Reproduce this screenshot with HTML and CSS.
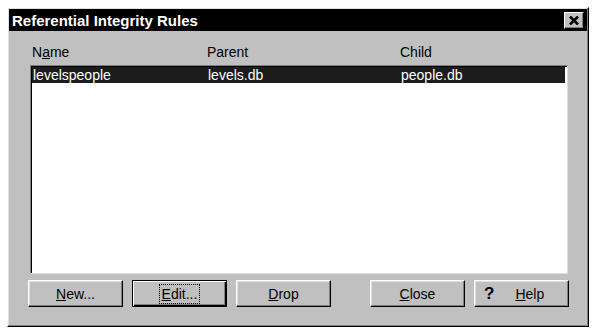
FILE: index.html
```html
<!DOCTYPE html>
<html>
<head>
<meta charset="utf-8">
<link rel="stylesheet" href="styles.css">
</head>
<body>
<div class="window">
  <div class="titlebar">
    <span class="title">Referential Integrity Rules</span>
    <div class="close-btn">
      <svg width="10" height="9" viewBox="0 0 10 9"><path d="M1 0.5 L9 8.5 M9 0.5 L1 8.5" stroke="#000" stroke-width="2.6"/></svg>
    </div>
  </div>
  <div class="content">
    <div class="headers">
      <span>N<u>a</u>me</span>
      <span>Parent</span>
      <span>Child</span>
    </div>
    <div class="listbox">
      <div class="row selected">
        <span>levelspeople</span>
        <span>levels.db</span>
        <span>people.db</span>
      </div>
    </div>
    <div class="buttons">
      <button class="btn"><u>N</u>ew...</button>
      <button class="btn default"><span class="focus"><u>E</u>dit...</span></button>
      <button class="btn"><u>D</u>rop</button>
      <button class="btn spaced"><u>C</u>lose</button>
      <button class="btn help"><span class="q">?</span><span><u>H</u>elp</span></button>
    </div>
  </div>
</div>
</body>
</html>
```
FILE: styles.css
```css
html, body {
  margin: 0;
  padding: 0;
  background: #fff;
}
body {
  font-family: "Liberation Sans", Arial, sans-serif;
  font-size: 14px;
  color: #000;
}
.window {
  margin: 7px 0 0 7px;
  width: 582px;
  height: 320px;
  box-sizing: border-box;
  background: #c0c0c0;
  border-top: 1px solid #fff;
  border-left: 1px solid #fff;
  border-right: 1px solid #000;
  border-bottom: 1px solid #000;
  box-shadow: inset -1px -1px 0 #808080, inset 1px 1px 0 #dfdfdf;
  padding: 1px 1px 1px 1px;
  display: flex;
  flex-direction: column;
}
.titlebar {
  height: 22px;
  background: #000;
  color: #fff;
  display: flex;
  align-items: center;
  justify-content: space-between;
  padding: 0 3px 0 3px;
  flex: none;
}
.title {
  font-weight: bold;
  font-size: 15px;
}
.close-btn {
  width: 20px;
  height: 17px;
  box-sizing: border-box;
  background: #c0c0c0;
  border-top: 1px solid #fff;
  border-left: 1px solid #fff;
  border-right: 1px solid #000;
  border-bottom: 1px solid #000;
  box-shadow: inset -1px -1px 0 #808080;
  display: flex;
  align-items: center;
  justify-content: center;
}
.content {
  flex: 1;
  padding: 0 0 0 21px;
  display: flex;
  flex-direction: column;
}
.headers {
  height: 34px;
  display: grid;
  grid-template-columns: 175px 193px 1fr;
  align-items: center;
  padding: 8px 0 0 2px;
  box-sizing: border-box;
}
.listbox {
  width: 538px;
  height: 209px;
  box-sizing: border-box;
  background: #fff;
  border-top: 1px solid #808080;
  border-left: 1px solid #808080;
  border-right: 1px solid #dfdfdf;
  border-bottom: 1px solid #dfdfdf;
  box-shadow: inset 1px 1px 0 #000;
  padding: 1px 1px 0 1px;
}
.row {
  height: 16px;
  display: grid;
  grid-template-columns: 175px 193px 1fr;
  align-items: center;
  padding-left: 1px;
  margin-right: 1px;
  line-height: 16px;
}
.row.selected {
  background: #1c1c1c;
  color: #fff;
}
.buttons {
  display: flex;
  margin-top: 6px;
  margin-left: -2px;
  gap: 9px;
}
.btn {
  width: 95px;
  height: 27px;
  box-sizing: border-box;
  background: #c0c0c0;
  font-family: "Liberation Sans", Arial, sans-serif;
  font-size: 14px;
  color: #000;
  border-top: 1px solid #fff;
  border-left: 1px solid #fff;
  border-right: 1px solid #000;
  border-bottom: 1px solid #000;
  box-shadow: inset -1px -1px 0 #808080, inset 1px 1px 0 #dfdfdf;
  padding: 0;
  display: flex;
  align-items: center;
  justify-content: center;
}
.btn.default {
  border: 1px solid #000;
  box-shadow: inset 1px 1px 0 #fff, inset -1px -1px 0 #000, inset -2px -2px 0 #808080;
}
.focus {
  outline: 1px dotted #000;
  outline-offset: 0;
  padding: 1px 2px;
}
.btn.spaced {
  margin-left: 30px;
}
.btn.help {
  justify-content: flex-start;
  padding-left: 9px;
  gap: 21px;
}
.q {
  font-weight: bold;
  font-size: 17px;
}
```
